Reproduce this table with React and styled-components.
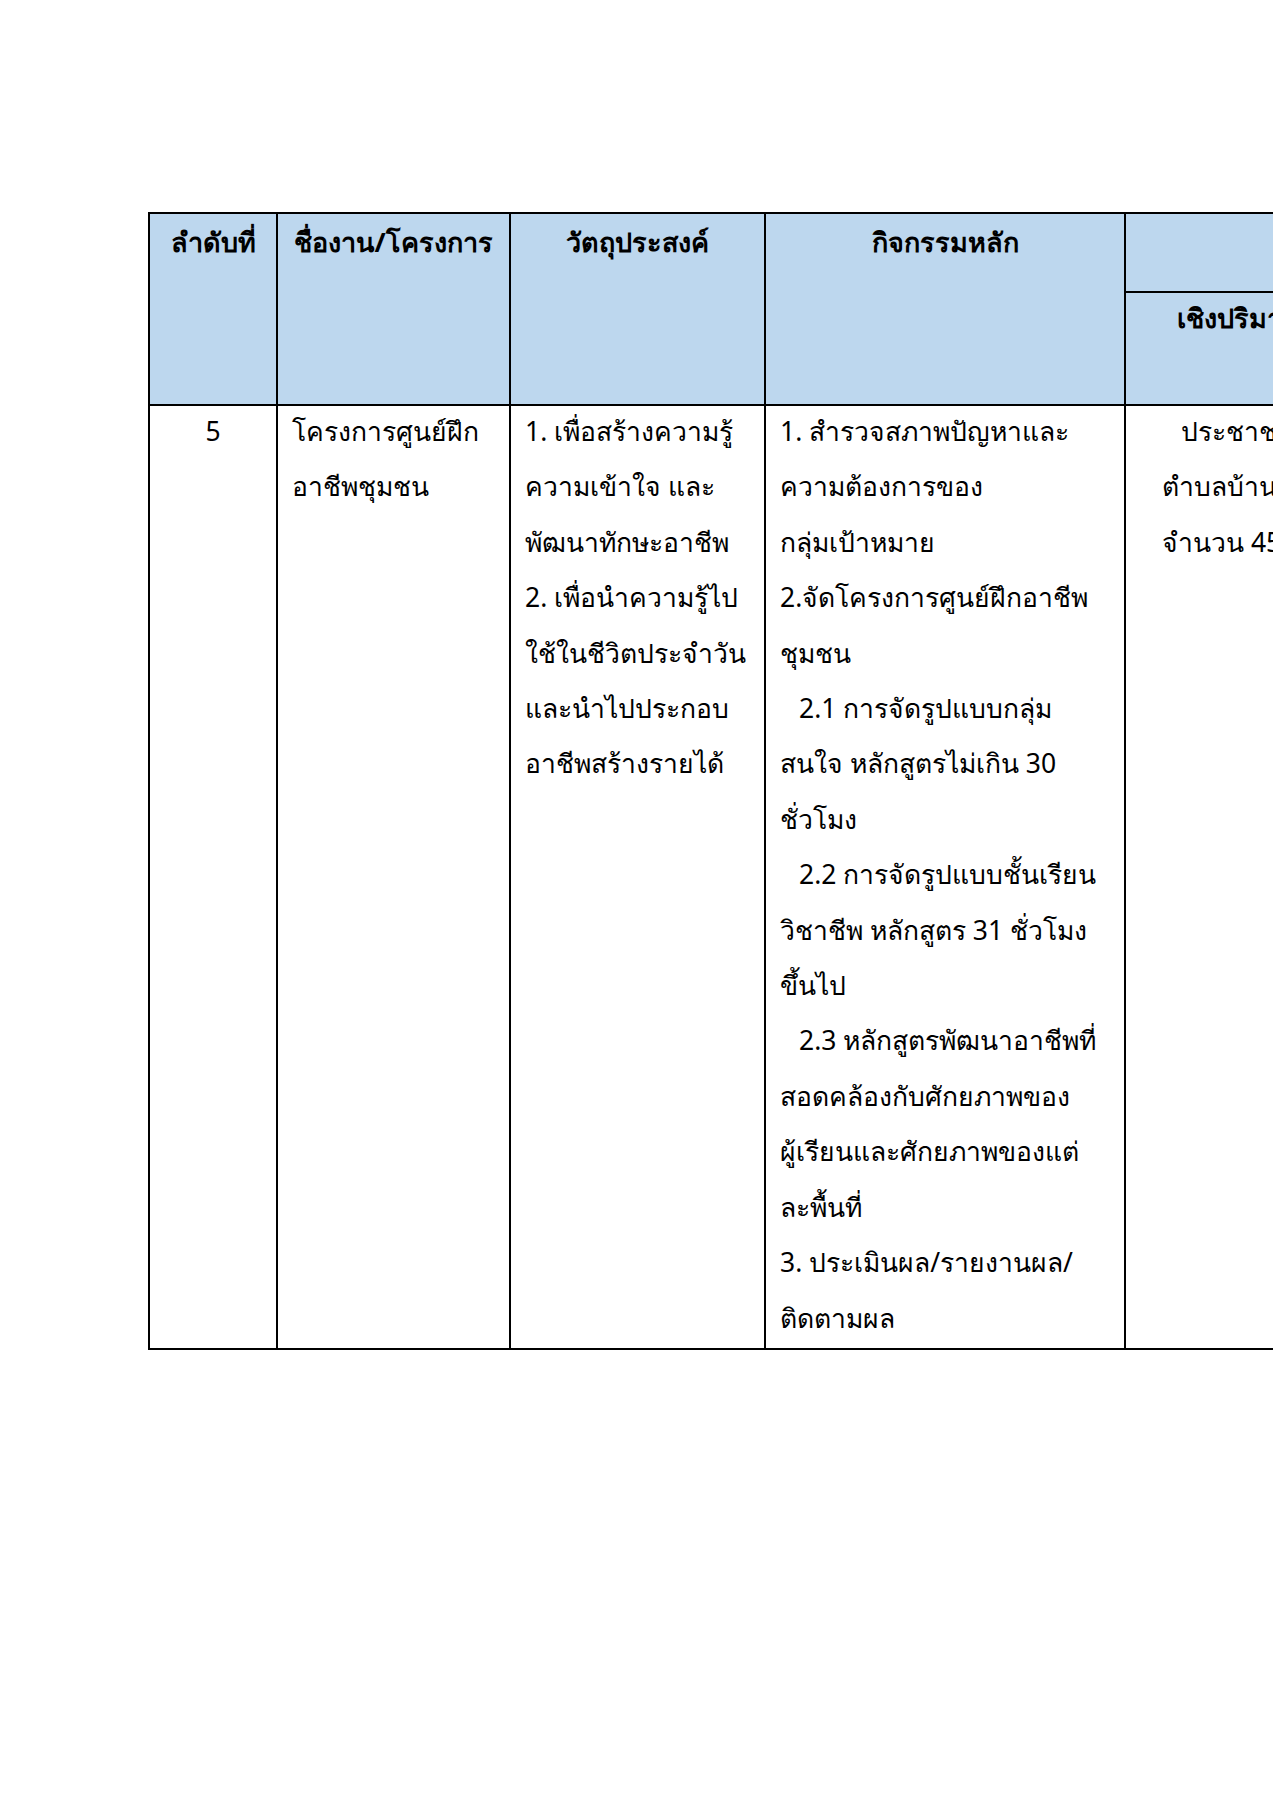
import React from 'react';
import styled, { createGlobalStyle } from 'styled-components';

const GlobalStyle = createGlobalStyle`
  html, body {
    margin: 0;
    padding: 0;
    background: #fff;
    overflow: hidden;
  }
  body {
    font-family: "Noto Sans", "Open Sans", sans-serif;
    color: #000;
  }
`;

const Page = styled.div`
  width: 1273px;
  height: 1800px;
  padding: 212px 0 0 148px;
  box-sizing: border-box;
  overflow: hidden;
`;

const Table = styled.table`
  border-collapse: collapse;
  table-layout: fixed;
  width: 1210px;
  font-size: 26.5px;
  font-weight: 400;
  line-height: 55.4px;
`;

const HeadCell = styled.th`
  background: #bdd7ee;
  border: 2px solid #000;
  font-size: 27px;
  font-weight: 700;
  text-align: center;
  vertical-align: top;
  padding: 0 6px;
  height: ${(p) => p.$h || 'auto'};
  line-height: ${(p) => p.$lh || '55.4px'};
  white-space: nowrap;
`;

const Cell = styled.td`
  border: 2px solid #000;
  vertical-align: top;
  text-align: ${(p) => (p.$center ? 'center' : 'left')};
  padding: 0 0 2px ${(p) => p.$pad || '14px'};
  white-space: nowrap;
  overflow: hidden;
`;

const Block = styled.div`
  margin-top: -2px;
`;

const Line = styled.div`
  padding-left: ${(p) => (p.$indent ? '19px' : '0')};
`;

const Lines = ({ items }) => (
  <Block>
    {items.map((t, i) => (
      <Line key={i} $indent={t.startsWith('  ')}>
        {t.trim()}
      </Line>
    ))}
  </Block>
);

const objectives = [
  '1. เพื่อสร้างความรู้',
  'ความเข้าใจ และ',
  'พัฒนาทักษะอาชีพ',
  '2. เพื่อนำความรู้ไป',
  'ใช้ในชีวิตประจำวัน',
  'และนำไปประกอบ',
  'อาชีพสร้างรายได้',
];

const activities = [
  '1. สำรวจสภาพปัญหาและ',
  'ความต้องการของ',
  'กลุ่มเป้าหมาย',
  '2.จัดโครงการศูนย์ฝึกอาชีพ',
  'ชุมชน',
  '  2.1 การจัดรูปแบบกลุ่ม',
  'สนใจ หลักสูตรไม่เกิน 30',
  'ชั่วโมง',
  '  2.2 การจัดรูปแบบชั้นเรียน',
  'วิชาชีพ หลักสูตร 31 ชั่วโมง',
  'ขึ้นไป',
  '  2.3 หลักสูตรพัฒนาอาชีพที่',
  'สอดคล้องกับศักยภาพของ',
  'ผู้เรียนและศักยภาพของแต่',
  'ละพื้นที่',
  '3. ประเมินผล/รายงานผล/',
  'ติดตามผล',
];

const target = ['  ประชาชนใน', 'ตำบลบ้านใหม่', 'จำนวน 45 คน'];

export default function App() {
  return (
    <>
      <GlobalStyle />
      <Page>
        <Table>
          <colgroup>
            <col style={{ width: 128 }} />
            <col style={{ width: 233 }} />
            <col style={{ width: 255 }} />
            <col style={{ width: 360 }} />
            <col style={{ width: 234 }} />
          </colgroup>
          <thead>
            <tr>
              <HeadCell rowSpan={2}>ลำดับที่</HeadCell>
              <HeadCell rowSpan={2}>ชื่องาน/โครงการ</HeadCell>
              <HeadCell rowSpan={2}>วัตถุประสงค์</HeadCell>
              <HeadCell rowSpan={2}>กิจกรรมหลัก</HeadCell>
              <HeadCell $h="77px" />
            </tr>
            <tr>
              <HeadCell $h="111px" $lh="50px">
                เชิงปริมาณ
              </HeadCell>
            </tr>
          </thead>
          <tbody>
            <tr>
              <Cell $center $pad="0">
                <Lines items={['5']} />
              </Cell>
              <Cell>
                <Lines items={['โครงการศูนย์ฝึก', 'อาชีพชุมชน']} />
              </Cell>
              <Cell>
                <Lines items={objectives} />
              </Cell>
              <Cell>
                <Lines items={activities} />
              </Cell>
              <Cell $pad="36px">
                <Lines items={target} />
              </Cell>
            </tr>
          </tbody>
        </Table>
      </Page>
    </>
  );
}
